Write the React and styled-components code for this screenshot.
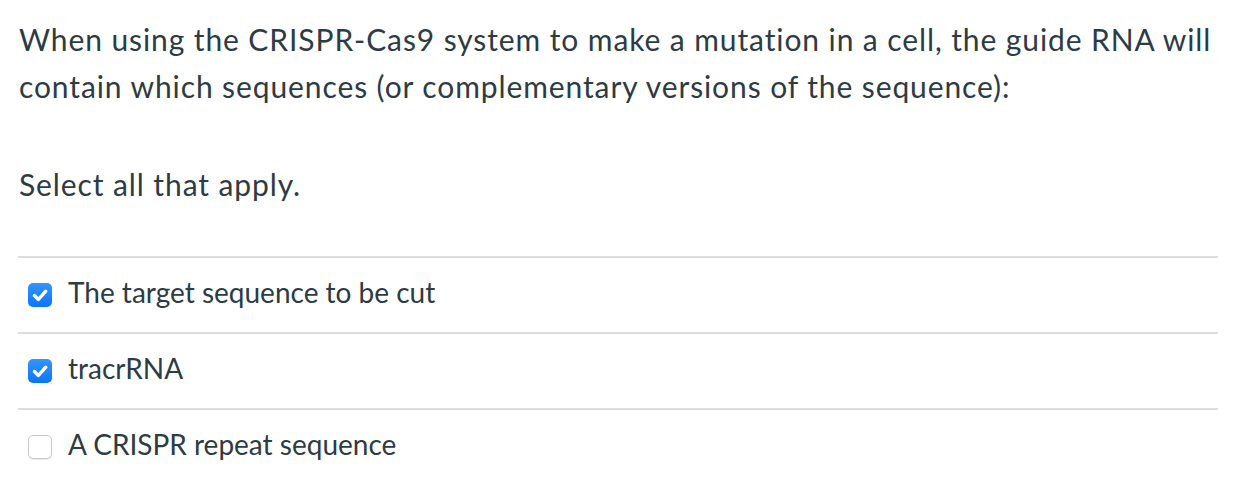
import React from "react";
import styled, { createGlobalStyle } from "styled-components";

const GlobalStyle = createGlobalStyle`
  body {
    margin: 0;
    background: #ffffff;
    font-family: Lato, "Liberation Sans", sans-serif;
    color: #2d3b45;
  }
`;

const options = [
  { label: "The target sequence to be cut", checked: true },
  { label: "tracrRNA", checked: true },
  { label: "A CRISPR repeat sequence", checked: false },
];

function App() {
  return (
    <>
      <GlobalStyle />
      <Question>
        <Prompt>
          <p>
            When using the CRISPR-Cas9 system to make a mutation in a cell, the guide RNA will
            contain which sequences (or complementary versions of the sequence):
          </p>
          <p>Select all that apply.</p>
        </Prompt>
        <Answers>
          {options.map((opt) => (
            <Answer key={opt.label}>
              <Box $checked={opt.checked}>
                {opt.checked && (
                  <svg width="24" height="24" viewBox="0 0 24 24">
                    <path
                      d="M6.4 12.6 L10.4 16.4 L17.8 8.2"
                      fill="none"
                      stroke="#fff"
                      strokeWidth="3.4"
                      strokeLinecap="round"
                      strokeLinejoin="round"
                    />
                  </svg>
                )}
              </Box>
              <Label>{opt.label}</Label>
            </Answer>
          ))}
        </Answers>
      </Question>
    </>
  );
}

const Question = styled.div`
  width: 1200px;
  padding: 16px 0 0 18px;
`;

const Prompt = styled.div`
  padding-left: 1px;
  font-size: 30px;
  line-height: 47px;
  letter-spacing: 0.9px;

  p {
    margin: 0;
  }

  p + p {
    margin-top: 51px;
  }
`;

const Answers = styled.div`
  margin-top: 48px;
  border-top: 2px solid #dddddd;
`;

const Answer = styled.label`
  display: flex;
  align-items: center;
  height: 74px;
  padding-left: 10px;
  border-bottom: 2px solid #dddddd;

  &:last-child {
    border-bottom: none;
  }
`;

const Box = styled.span`
  display: flex;
  align-items: center;
  justify-content: center;
  width: 24px;
  height: 24px;
  box-sizing: border-box;
  border-radius: 5px;
  margin-right: 16px;
  background: ${(p) => (p.$checked ? "linear-gradient(#3495ff, #0b74fb)" : "#ffffff")};
  border: ${(p) => (p.$checked ? "none" : "1px solid #c8c8c8")};
  box-shadow: ${(p) => (p.$checked ? "none" : "0 1px 1px rgba(0,0,0,0.08)")};
`;

const Label = styled.span`
  font-size: 28px;
  line-height: 32px;
  padding-bottom: 7px;
`;

export default App;
